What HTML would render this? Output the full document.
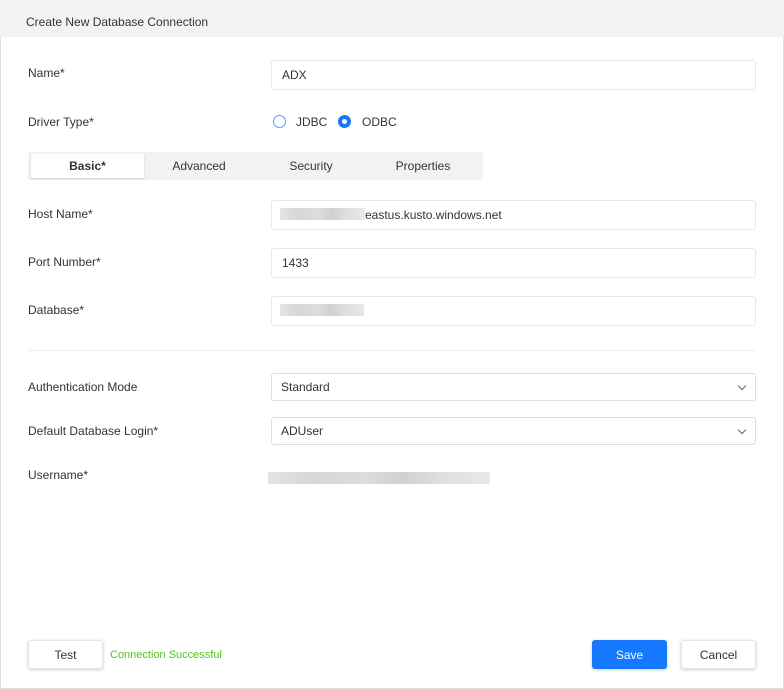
<!DOCTYPE html>
<html><head><style>
*{box-sizing:border-box;margin:0;padding:0}
body{width:784px;height:689px;background:#fff;font-family:"Liberation Sans",Arial,sans-serif;font-size:12px;color:#333;position:relative;overflow:hidden}
.frame{position:absolute;left:0;top:0;width:784px;height:689px;border:1px solid #ddd;border-top:none}
.hdr{position:absolute;left:0;top:0;width:784px;height:37px;background:#f3f3f3;padding:15px 0 0 26px;font-size:12px;color:#333}
.lbl{position:absolute;left:28px;font-size:12px;color:#333}
.inp{position:absolute;left:271px;width:485px;height:30px;border:1px solid #e8e8e8;border-radius:3px;padding:7px 10px;font-size:12px;color:#333}
.sel{height:28px;border-color:#ddd;padding:6px 9px}
.chev{position:absolute;right:10px;top:9px;width:6px;height:6px;border-right:1px solid #666;border-bottom:1px solid #666;transform:rotate(45deg)}
.blur{position:absolute;height:12px;background:linear-gradient(90deg,#e3e3e3,#d5d8d8 20%,#dcdcdc 45%,#d0d0d0 60%,#e0e0e0 80%,#e8e8e8)}
.tabs{position:absolute;left:28px;top:152px;width:455px;height:28px;background:#f2f2f2;border-radius:3px}
.tab{position:absolute;top:7px;font-size:12px;color:#333;text-align:center;width:112px}
.tab.on{top:2px;left:3px;height:24px;width:113px;background:#fff;box-shadow:0 1px 2px rgba(0,0,0,.15);padding-top:5px;font-weight:bold}
.btn{position:absolute;top:640px;height:29px;border-radius:3px;box-shadow:0 1px 3px rgba(0,0,0,.2);border:1px solid #e5e5e5;background:#fff;text-align:center;padding-top:7px;font-size:12px;color:#333}
</style></head><body>
<div class="frame"></div>
<div class="hdr">Create New Database Connection</div>
<div class="lbl" style="top:66px">Name*</div>
<div class="inp" style="top:60px">ADX</div>
<div class="lbl" style="top:115px">Driver Type*</div>
<div style="position:absolute;left:273px;top:115px;width:13px;height:13px;border:1px solid #5a9cf8;border-radius:50%"></div>
<div style="position:absolute;left:296px;top:115px">JDBC</div>
<div style="position:absolute;left:338px;top:115px;width:13px;height:13px;background:#1677ff;border-radius:50%"><div style="position:absolute;left:4px;top:4px;width:5px;height:5px;background:#fff;border-radius:50%"></div></div>
<div style="position:absolute;left:362px;top:115px">ODBC</div>
<div class="tabs">
<div class="tab on">Basic*</div>
<div class="tab" style="left:115px">Advanced</div>
<div class="tab" style="left:227px">Security</div>
<div class="tab" style="left:339px">Properties</div>
</div>
<div class="lbl" style="top:207px">Host Name*</div>
<div class="inp" style="top:200px;padding-left:93px">eastus.kusto.windows.net</div>
<div class="blur" style="left:280px;top:208px;width:85px"></div>
<div class="lbl" style="top:255px">Port Number*</div>
<div class="inp" style="top:248px">1433</div>
<div class="lbl" style="top:303px">Database*</div>
<div class="inp" style="top:296px"></div>
<div class="blur" style="left:280px;top:304px;width:84px"></div>
<div style="position:absolute;left:28px;top:350px;width:727px;height:1px;background:#eee"></div>
<div class="lbl" style="top:380px">Authentication Mode</div>
<div class="inp sel" style="top:373px">Standard<div class="chev"></div></div>
<div class="lbl" style="top:424px">Default Database Login*</div>
<div class="inp sel" style="top:417px">ADUser<div class="chev"></div></div>
<div class="lbl" style="top:468px">Username*</div>
<div class="blur" style="left:268px;top:472px;width:222px"></div>
<div class="btn" style="left:28px;width:75px">Test</div>
<div style="position:absolute;left:110px;top:649px;font-size:11px;color:#52c41a">Connection Successful</div>
<div class="btn" style="left:592px;width:75px;background:#1677ff;border-color:#1677ff;color:#fff">Save</div>
<div class="btn" style="left:681px;width:75px">Cancel</div>
</body></html>
